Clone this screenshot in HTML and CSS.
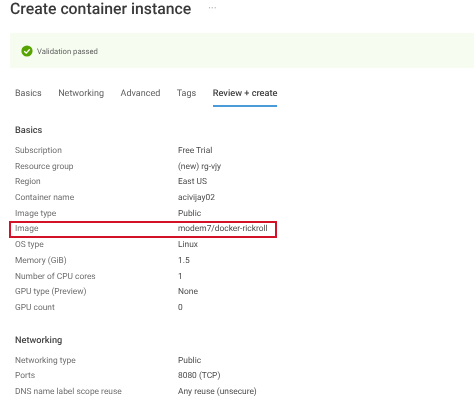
FILE: index.html
```html
<!DOCTYPE html>
<html lang="en">
<head>
  <meta charset="UTF-8">
  <title>Create container instance</title>
  <link rel="stylesheet" href="styles.css">
</head>
<body>
  <div class="page">
    <div class="title-bar">
      <h1 class="title">Create container instance</h1>
      <span class="more">&middot;&middot;&middot;</span>
    </div>

    <div class="banner">
      <svg class="check" viewBox="0 0 12 12" width="12" height="12">
        <circle cx="6" cy="6" r="5.6" fill="#57a300"/>
        <path d="M3.2 6.2 L5.2 8.1 L8.8 4.2" fill="none" stroke="#fff" stroke-width="1.4"/>
      </svg>
      <span>Validation passed</span>
    </div>

    <div class="tabs">
      <span class="tab">Basics</span>
      <span class="tab">Networking</span>
      <span class="tab">Advanced</span>
      <span class="tab">Tags</span>
      <span class="tab active">Review + create</span>
    </div>

    <div class="section">
      <h2 class="section-title">Basics</h2>
      <div class="row"><span class="label">Subscription</span><span class="value">Free Trial</span></div>
      <div class="row"><span class="label">Resource group</span><span class="value">(new) rg-vjy</span></div>
      <div class="row"><span class="label">Region</span><span class="value">East US</span></div>
      <div class="row"><span class="label">Container name</span><span class="value">acivijay02</span></div>
      <div class="row"><span class="label">Image type</span><span class="value">Public</span></div>
      <div class="row highlighted"><span class="label">Image</span><span class="value">modem7/docker-rickroll</span></div>
      <div class="row"><span class="label">OS type</span><span class="value">Linux</span></div>
      <div class="row"><span class="label">Memory (GiB)</span><span class="value">1.5</span></div>
      <div class="row"><span class="label">Number of CPU cores</span><span class="value">1</span></div>
      <div class="row"><span class="label">GPU type (Preview)</span><span class="value">None</span></div>
      <div class="row"><span class="label">GPU count</span><span class="value">0</span></div>
    </div>

    <div class="section">
      <h2 class="section-title">Networking</h2>
      <div class="row"><span class="label">Networking type</span><span class="value">Public</span></div>
      <div class="row"><span class="label">Ports</span><span class="value">8080 (TCP)</span></div>
      <div class="row"><span class="label">DNS name label scope reuse</span><span class="value">Any reuse (unsecure)</span></div>
    </div>
  </div>
</body>
</html>
```

FILE: styles.css
```css
body {
  margin: 0;
  background: #fff;
  font-family: Roboto, "Open Sans", Arial, sans-serif;
  font-size: 7.7px;
  color: #555;
  text-rendering: geometricPrecision;
  overflow: hidden;
}

.page {
  height: 414px;
  overflow: hidden;
  filter: blur(0.3px);
}

.title-bar {
  display: flex;
  align-items: center;
  padding-left: 10px;
  height: 18px;
}

.title {
  margin: 0;
  font-size: 15.8px;
  font-weight: 500;
  line-height: 18px;
  color: #3a3a3a;
}

.more {
  margin-left: 17px;
  font-size: 9px;
  letter-spacing: 0.6px;
  color: #777;
}

.banner {
  display: flex;
  align-items: center;
  gap: 4px;
  margin: 15px 0 0 10px;
  padding: 1px 0 0 11px;
  height: 34px;
  background: #f6fdf0;
  color: #5f5f5f;
}

.tabs {
  display: flex;
  gap: 16.5px;
  margin: 17.5px 0 0 15px;
  font-size: 9px;
  color: #5f5f5f;
}

.tab {
  height: 19px;
  line-height: 16px;
}

.tab.active {
  color: #444;
  font-size: 9.2px;
  font-weight: 500;
  border-bottom: 2px solid #4a9bd8;
}

.section {
  margin-top: 16.5px;
  padding-left: 15px;
}

.section + .section {
  margin-top: 16px;
}

.section-title {
  margin: 0 0 5px;
  font-size: 9.2px;
  font-weight: 500;
  line-height: 16px;
  color: #444;
}

.row {
  display: grid;
  grid-template-columns: 163px 1fr;
  height: 15.7px;
  line-height: 15.7px;
  font-size: 8.4px;
}

.label {
  color: #6e6e6e;
}

.value {
  color: #4c4c4c;
}

.highlighted {
  position: relative;
}

.highlighted::after {
  content: "";
  position: absolute;
  top: -1px;
  left: -6px;
  width: 268px;
  height: 17px;
  box-sizing: border-box;
  border: 2px solid #d3122a;
}
```
